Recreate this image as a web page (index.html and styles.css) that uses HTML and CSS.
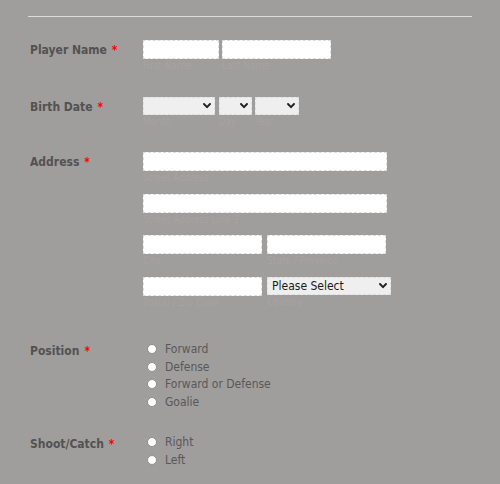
FILE: index.html
```html
<!DOCTYPE html>
<html lang="en">
<head>
<meta charset="utf-8">
<title>Player Registration</title>
<link rel="stylesheet" href="styles.css">
</head>
<body>
<div class="form">
  <div class="divider"></div>

  <div class="row row-name">
    <div class="label">Player Name<span class="req">*</span></div>
    <div class="controls">
      <div class="line">
        <div class="field"><div class="input w-first"></div><div class="sub">First Name</div></div>
        <div class="field"><div class="input w-last"></div><div class="sub">Last Name</div></div>
      </div>
    </div>
  </div>

  <div class="row row-birth">
    <div class="label">Birth Date<span class="req">*</span></div>
    <div class="controls">
      <div class="line line-date">
        <div class="field"><div class="select w-month"><span></span><svg class="chev" viewBox="0 0 8 6" width="8" height="6"><polyline points="1,1 4,4.2 7,1"/></svg></div><div class="sub">Month</div></div>
        <div class="field"><div class="select w-day"><span></span><svg class="chev" viewBox="0 0 8 6" width="8" height="6"><polyline points="1,1 4,4.2 7,1"/></svg></div><div class="sub">Day</div></div>
        <div class="field"><div class="select w-year"><span></span><svg class="chev" viewBox="0 0 8 6" width="8" height="6"><polyline points="1,1 4,4.2 7,1"/></svg></div><div class="sub">Year</div></div>
      </div>
    </div>
  </div>

  <div class="row row-address">
    <div class="label">Address<span class="req">*</span></div>
    <div class="controls address">
      <div class="field"><div class="input w-full"></div><div class="sub">Street Address</div></div>
      <div class="field"><div class="input w-full"></div><div class="sub">Street Address Line 2</div></div>
      <div class="line line-addr">
        <div class="field"><div class="input w-half"></div><div class="sub">City</div></div>
        <div class="field"><div class="input w-half"></div><div class="sub">State / Province</div></div>
      </div>
      <div class="line line-addr">
        <div class="field"><div class="input w-half"></div><div class="sub">Postal / Zip Code</div></div>
        <div class="field"><div class="select w-country"><span class="sel-text">Please Select</span><svg class="chev" viewBox="0 0 8 6" width="8" height="6"><polyline points="1,1 4,4.2 7,1"/></svg></div><div class="sub">Country</div></div>
      </div>
    </div>
  </div>

  <div class="row row-position">
    <div class="label label-radio">Position<span class="req">*</span></div>
    <div class="controls options">
      <div class="option"><span class="radio"></span>Forward</div>
      <div class="option"><span class="radio"></span>Defense</div>
      <div class="option"><span class="radio"></span>Forward or Defense</div>
      <div class="option"><span class="radio"></span>Goalie</div>
    </div>
  </div>

  <div class="row row-shoot">
    <div class="label label-radio">Shoot/Catch<span class="req">*</span></div>
    <div class="controls options options-shoot">
      <div class="option"><span class="radio"></span>Right</div>
      <div class="option"><span class="radio"></span>Left</div>
    </div>
  </div>
</div>
</body>
</html>
```

FILE: styles.css
```css
html, body {
  margin: 0;
  padding: 0;
  background: #a09d9d;
}

body {
  font-family: "DejaVu Sans Condensed", "DejaVu Sans", sans-serif;
  font-stretch: semi-condensed;
  font-size: 12px;
  color: #555;
  width: 500px;
  height: 484px;
  overflow: hidden;
}

.form {
  margin-left: 28px;
  width: 444px;
  padding-top: 16px;
}

.divider {
  height: 1px;
  background: #dcdcdc;
}

.row {
  display: flex;
  align-items: flex-start;
}

.row-name { margin-top: 23px; }
.row-birth { margin-top: 25px; }
.row-address { margin-top: 24px; }
.row-position { margin-top: 31px; }
.row-shoot { margin-top: 22px; }

.label {
  width: 115px;
  flex: none;
  box-sizing: border-box;
  padding-left: 2px;
  padding-top: 1px;
  line-height: 19px;
  font-weight: bold;
  color: #525252;
}

.label-radio {
  padding-top: 2px;
}

.req {
  color: #f00;
  margin-left: 5px;
}

.controls {
  display: flex;
  flex-direction: column;
}

.line {
  display: flex;
  gap: 3px;
}

.line-date { gap: 3.5px; }
.line-addr { gap: 5px; }

.address { gap: 9.67px; }

.field {
  display: flex;
  flex-direction: column;
}

.input {
  height: 19px;
  box-sizing: border-box;
  background: #fff;
  border: 1px dashed #dedede;
}

.select {
  height: 18px;
  box-sizing: border-box;
  background: #efefef;
  border: 1px dashed #dedede;
  display: flex;
  align-items: center;
  justify-content: space-between;
  padding: 0 3px 0 4px;
}

.sel-text {
  color: #1a1a1a;
  font-size: 12px;
  line-height: 16px;
}

.chev {
  display: block;
  fill: none;
  stroke: #222;
  stroke-width: 1.9;
  stroke-linecap: round;
  stroke-linejoin: round;
}

.w-first { width: 76px; }
.w-last { width: 109px; }
.w-month { width: 72px; }
.w-day { width: 33px; }
.w-year { width: 44px; }
.w-full { width: 244px; }
.w-half { width: 119px; }
.w-country { width: 124px; }

.sub {
  margin-top: 1px;
  font-size: 10px;
  line-height: 12px;
  color: #a6a3a3;
  white-space: nowrap;
}

.options .option {
  height: 17.7px;
}

.options-shoot .option {
  height: 18px;
}

.option {
  display: flex;
  align-items: center;
  color: #585858;
  font-size: 12px;
  white-space: nowrap;
}

.radio {
  width: 10px;
  height: 10px;
  box-sizing: border-box;
  border-radius: 50%;
  background: #fff;
  border: 1px solid #8f8f8f;
  margin-left: 4px;
  margin-right: 8px;
  flex: none;
}
```
